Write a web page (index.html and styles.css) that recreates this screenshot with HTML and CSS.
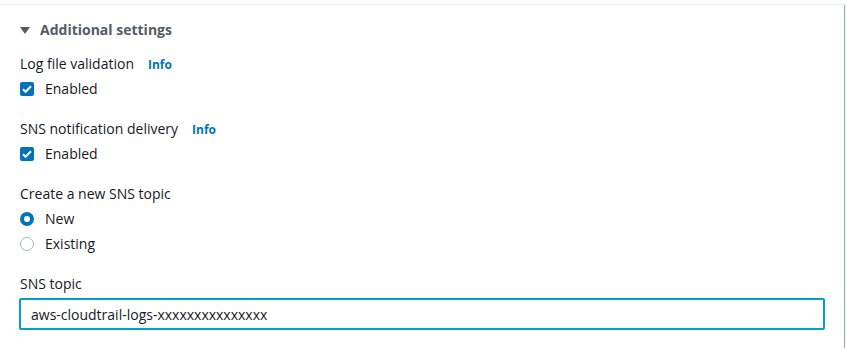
FILE: index.html
```html
<!DOCTYPE html>
<html>
<head>
    <title>Additional settings</title>
    <link rel="stylesheet" href="styles.css">
</head>
<body>
    <div class="card">
        <div class="section">
            <div class="expander">
                <span class="caret"></span>
                <span class="expander-title">Additional settings</span>
            </div>

            <div class="field">
                <div class="label">Log file validation <a class="info" href="#">Info</a></div>
                <label class="option">
                    <input type="checkbox" checked>
                    <span>Enabled</span>
                </label>
            </div>

            <div class="field">
                <div class="label">SNS notification delivery <a class="info" href="#">Info</a></div>
                <label class="option">
                    <input type="checkbox" checked>
                    <span>Enabled</span>
                </label>
            </div>

            <div class="field">
                <div class="label">Create a new SNS topic</div>
                <label class="option">
                    <input type="radio" name="topic" checked>
                    <span>New</span>
                </label>
                <label class="option">
                    <input type="radio" name="topic">
                    <span>Existing</span>
                </label>
            </div>

            <div class="field">
                <div class="label">SNS topic</div>
                <input class="text-input" type="text" value="aws-cloudtrail-logs-xxxxxxxxxxxxxxx">
            </div>
        </div>
    </div>
</body>
</html>
```

FILE: styles.css
```css
body {
    margin: 0;
    padding-top: 4px;
    background-color: #ffffff;
    font-family: "Open Sans", "Noto Sans", sans-serif;
    font-size: 14px;
    line-height: 22px;
    color: #16191f;
}
.card {
    width: 844px;
    height: 344px;
    box-sizing: border-box;
    background-color: #ffffff;
    border-top: 1px solid #eaeded;
    box-shadow: 0 1px 1px 0 rgba(0, 28, 36, 0.5), 1px 1px 1px 0 rgba(0, 28, 36, 0.3);
}
.section {
    padding: 14px 20px 18px 20px;
    display: flex;
    flex-direction: column;
    gap: 12px;
}
.expander {
    display: flex;
    align-items: center;
    gap: 10px;
    color: #545b64;
    font-weight: 700;
}
.caret {
    width: 0;
    height: 0;
    border-left: 5px solid transparent;
    border-right: 5px solid transparent;
    border-top: 7px solid #545b64;
    margin-top: 1px;
}
.field {
    display: flex;
    flex-direction: column;
    gap: 3px;
    margin-bottom: 6px;
}
.label {
    display: flex;
    align-items: baseline;
    gap: 14px;
    height: 22px;
}
.info {
    color: #0073bb;
    font-size: 12px;
    font-weight: 700;
    line-height: 22px;
    text-decoration: none;
}
.option {
    display: flex;
    align-items: center;
    gap: 11px;
}
.option input {
    appearance: none;
    margin: 0;
    width: 14px;
    height: 14px;
    box-sizing: border-box;
    border: 2px solid #aab7b8;
    background-color: #ffffff;
}
.option input[type="checkbox"] {
    border-radius: 2px;
}
.option input[type="checkbox"]:checked {
    border-color: #0073bb;
    background-color: #0073bb;
    background-image: url("data:image/svg+xml,%3Csvg xmlns='http://www.w3.org/2000/svg' viewBox='0 0 14 14'%3E%3Cpath d='M3 7.2l2.6 2.6L11 4.3' fill='none' stroke='white' stroke-width='2'/%3E%3C/svg%3E");
    background-position: -2px -2px;
    background-size: 14px 14px;
}
.option input[type="radio"] {
    border-radius: 50%;
    border-width: 1.5px;
}
.option input[type="radio"]:checked {
    border: 4px solid #0073bb;
}
.text-input {
    box-sizing: border-box;
    width: 806px;
    height: 32px;
    margin-left: -1px;
    padding: 0 10px;
    border: 2px solid #00a1c9;
    border-radius: 2px;
    font-family: inherit;
    font-size: 14px;
    color: #16191f;
    outline: none;
}
```
